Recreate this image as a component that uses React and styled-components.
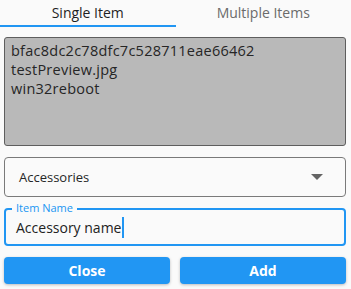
import React from "react";
import styled, { createGlobalStyle } from "styled-components";

const Global = createGlobalStyle`
  html, body { margin: 0; padding: 0; background: #fafafa; }
  * { box-sizing: border-box; }
`;

const Page = styled.div`
  width: 351px;
  height: 289px;
  background: #fafafa;
  font-family: "Open Sans", "Noto Sans", sans-serif;
  color: #212121;
  overflow: hidden;
`;

const Tabs = styled.div`
  display: flex;
  height: 27px;
`;

const Tab = styled.div`
  flex: 1;
  display: flex;
  align-items: center;
  justify-content: center;
  font-size: 14px;
  font-weight: 500;
  padding-bottom: 1px;
  color: ${(p) => (p.$active ? "#1f1f1f" : "#6b6b6b")};
  border-bottom: 2px solid ${(p) => (p.$active ? "#2196f3" : "transparent")};
`;

const Content = styled.div`
  display: flex;
  flex-direction: column;
  gap: 11px;
  padding: 10px 5px 0 4px;
`;

const ListBox = styled.div`
  height: 109px;
  background: #b9b9b9;
  border: 1px solid #5e5e5e;
  border-radius: 3px;
  padding: 3px 6px;
  font-size: 14.5px;
  letter-spacing: 0.25px;
  line-height: 19px;
  color: #262626;
`;

const Select = styled.div`
  height: 40px;
  border: 1px solid #7a7a7a;
  border-radius: 4px;
  display: flex;
  align-items: center;
  justify-content: space-between;
  padding: 0 22px 0 14px;
  font-size: 13px;
  color: #262626;
`;

const Arrow = styled.span`
  width: 0;
  height: 0;
  border-left: 6px solid transparent;
  border-right: 6px solid transparent;
  border-top: 6px solid #646464;
`;

const Field = styled.div`
  position: relative;
  height: 38px;
  border: 2px solid #2196f3;
  border-radius: 4px;
  display: flex;
  align-items: center;
  padding: 0 0 0 10px;
`;

const FloatLabel = styled.span`
  position: absolute;
  top: -8px;
  left: 6px;
  padding: 0 4px;
  background: #fafafa;
  font-size: 11px;
  line-height: 12px;
  color: #2196f3;
`;

const InputText = styled.span`
  font-size: 14px;
  color: #222;
  display: flex;
  align-items: center;
`;

const Caret = styled.span`
  display: inline-block;
  width: 2px;
  height: 21px;
  background: #2196f3;
  margin-left: 1px;
`;

const Buttons = styled.div`
  display: flex;
  gap: 10px;
`;

const Button = styled.button`
  flex: 1;
  height: 27px;
  border: none;
  border-radius: 4px;
  background: #2196f3;
  color: #fff;
  font-family: inherit;
  font-size: 14px;
  font-weight: 700;
  box-shadow: 0 1px 3px rgba(0, 0, 0, 0.25);
  padding: 0;
`;

export default function App() {
  return (
    <Page>
      <Global />
      <Tabs>
        <Tab $active>Single Item</Tab>
        <Tab>Multiple Items</Tab>
      </Tabs>
      <Content>
        <ListBox>
          <div>bfac8dc2c78dfc7c528711eae66462</div>
          <div>testPreview.jpg</div>
          <div>win32reboot</div>
        </ListBox>
        <Select>
          <span>Accessories</span>
          <Arrow />
        </Select>
        <Field>
          <FloatLabel>Item Name</FloatLabel>
          <InputText>
            Accessory name<Caret />
          </InputText>
        </Field>
        <Buttons>
          <Button>Close</Button>
          <Button>Add</Button>
        </Buttons>
      </Content>
    </Page>
  );
}
